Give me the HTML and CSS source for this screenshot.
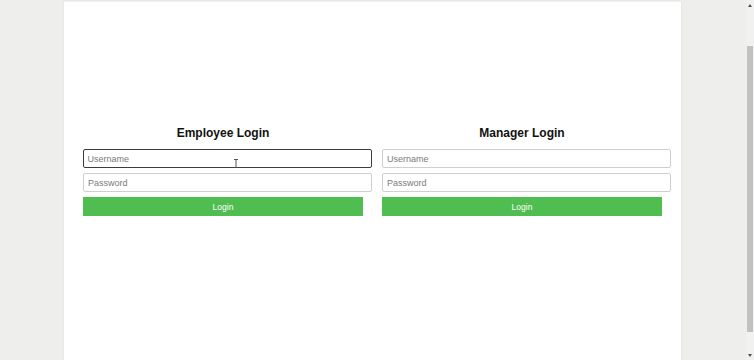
FILE: index.html
```html
<!DOCTYPE html>
<html lang="en">
<head>
<meta charset="utf-8">
<title>Login</title>
<link rel="stylesheet" href="styles.css">
</head>
<body>
<div class="page">
  <main class="container">
    <section class="panel">
      <h2 class="title">Employee Login</h2>
      <div class="field-wrap">
        <input class="field focused" type="text" placeholder="Username">
        <svg class="cursor" width="6" height="9" viewBox="0 0 6 9"><path d="M1 0.5H5M3 0.5V8.5M1 8.5H5" stroke="#444" stroke-width="0.9" fill="none"/></svg>
      </div>
      <input class="field" type="password" placeholder="Password">
      <button class="btn" type="button">Login</button>
    </section>
    <section class="panel">
      <h2 class="title">Manager Login</h2>
      <input class="field" type="text" placeholder="Username">
      <input class="field" type="password" placeholder="Password">
      <button class="btn" type="button">Login</button>
    </section>
  </main>
</div>
<div class="scrollbar">
  <div class="arrow up"></div>
  <div class="track"><div class="thumb"></div></div>
  <div class="arrow down"></div>
</div>
</body>
</html>
```

FILE: styles.css
```css
html, body {
  margin: 0;
  padding: 0;
  height: 360px;
  overflow: hidden;
}
body {
  display: flex;
  background: #eeefed;
  font-family: "Liberation Sans", Arial, sans-serif;
}
.page {
  flex: 1;
  display: flex;
  justify-content: center;
  padding-right: 1px;
}
.container {
  width: 617px;
  height: 360px;
  box-sizing: border-box;
  background: #ffffff;
  box-shadow: 0 0 3px rgba(0, 0, 0, 0.06);
  border-top: 1px solid #f0f0f0;
  margin-top: 1px;
  padding: 124px 19px 0;
  display: grid;
  grid-template-columns: 280px 280px;
  column-gap: 19px;
  align-content: start;
}
.panel {
  display: flex;
  flex-direction: column;
  align-items: flex-start;
}
.title {
  align-self: stretch;
  margin: 0 0 9px;
  font-size: 12px;
  line-height: 14px;
  font-weight: bold;
  text-align: center;
  color: #111;
}
.field-wrap {
  position: relative;
  width: 100%;
}
.field {
  display: block;
  width: calc(100% + 9px);
  height: 19px;
  box-sizing: border-box;
  margin: 0 0 5px;
  padding: 0 4px;
  border: 1px solid #cfcfcf;
  border-radius: 2px;
  font-family: "Liberation Sans", Arial, sans-serif;
  font-size: 9px;
  color: #333;
  background: #fff;
  outline: none;
}
.field::placeholder {
  color: #7a7a7a;
}
.field.focused {
  border: 1.5px solid #3c3c3c;
  padding: 0 3.5px;
}
.cursor {
  position: absolute;
  left: 150px;
  top: 10px;
}
.btn {
  width: 100%;
  height: 19px;
  margin: 0;
  padding: 0;
  border: none;
  border-radius: 0;
  background: #50bd51;
  color: #fff;
  font-family: "Liberation Sans", Arial, sans-serif;
  font-size: 8.5px;
}
.scrollbar {
  width: 8px;
  height: 360px;
  background: #f1f1f1;
  display: flex;
  flex-direction: column;
}
.arrow {
  height: 10px;
  display: flex;
  justify-content: center;
  align-items: center;
}
.arrow::before {
  content: "";
  width: 0;
  height: 0;
  border-left: 2.5px solid transparent;
  border-right: 2.5px solid transparent;
}
.arrow.up::before {
  border-bottom: 3px solid #505050;
}
.arrow.down::before {
  border-top: 3px solid #505050;
}
.track {
  flex: 1;
  padding: 36px 1px 18px;
  display: flex;
}
.thumb {
  flex: 1;
  background: #c1c1c1;
}
```
